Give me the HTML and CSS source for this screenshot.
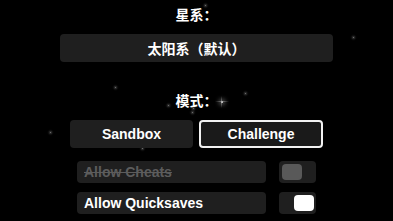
FILE: index.html
```html
<!DOCTYPE html>
<html lang="zh">

<head>
    <meta charset="UTF-8">
    <meta name="viewport" content="width=device-width, initial-scale=1.0">
    <title>星系设置</title>
    <link rel="stylesheet" href="styles.css">
</head>

<body>
    <div class="sky">
        <span class="star" style="left: 205px; top: 5px;"></span>
        <span class="star" style="left: 353px; top: 37px;"></span>
        <span class="star" style="left: 115px; top: 87px;"></span>
        <span class="star" style="left: 245px; top: 93px;"></span>
        <span class="star" style="left: 168px; top: 105px;"></span>
        <span class="star" style="left: 193px; top: 108px;"></span>
        <span class="star" style="left: 192px; top: 112px;"></span>
        <span class="star" style="left: 50px; top: 132px;"></span>
        <span class="star" style="left: 142px; top: 148px;"></span>
        <span class="sparkle" style="left: 222px; top: 102px;"></span>
    </div>

    <div class="menu">
        <div class="label">星系：</div>
        <div class="select">太阳系（默认）</div>

        <div class="label label-mode">模式：</div>
        <div class="modes">
            <div class="mode">Sandbox</div>
            <div class="mode active">Challenge</div>
        </div>

        <div class="option disabled">
            <div class="option-name">Allow Cheats</div>
            <div class="toggle"><span class="knob"></span></div>
        </div>
        <div class="option">
            <div class="option-name">Allow Quicksaves</div>
            <div class="toggle on"><span class="knob"></span></div>
        </div>
    </div>
</body>

</html>
```

FILE: styles.css
```css
* {
    box-sizing: border-box;
}

body {
    margin: 0;
    padding: 0;
    background-color: #000000;
    width: 393px;
    height: 221px;
    overflow: hidden;
    position: relative;
    font-family: "Liberation Sans", "Noto Sans CJK SC", sans-serif;
    font-weight: bold;
    font-size: 14px;
    color: #ffffff;
}

.sky {
    position: absolute;
    inset: 0;
    z-index: 0;
}

.star {
    position: absolute;
    width: 1px;
    height: 1px;
    background-color: #6a6a6a;
    box-shadow: 0 0 2px 1px rgba(120, 120, 120, 0.5);
}

.sparkle {
    position: absolute;
    width: 2px;
    height: 2px;
    margin: -1px 0 0 -1px;
    background-color: #bbbbbb;
    box-shadow: 0 0 4px 2px rgba(150, 150, 150, 0.5);
}

.sparkle::before,
.sparkle::after {
    content: "";
    position: absolute;
    background: linear-gradient(90deg, transparent, rgba(170, 170, 170, 0.6), transparent);
}

.sparkle::before {
    width: 14px;
    height: 1px;
    left: -6px;
    top: 0;
}

.sparkle::after {
    width: 1px;
    height: 12px;
    left: 0;
    top: -5px;
    background: linear-gradient(180deg, transparent, rgba(170, 170, 170, 0.6), transparent);
}

.menu {
    position: relative;
    z-index: 1;
    display: flex;
    flex-direction: column;
    align-items: center;
    padding-top: 4px;
}

.label {
    height: 20px;
    line-height: 20px;
    font-family: "Noto Sans CJK SC", sans-serif;
    font-size: 14px;
}

.label-mode {
    margin-top: 28px;
}

.select {
    margin-top: 10px;
    width: 273px;
    height: 28px;
    line-height: 28px;
    text-align: center;
    background-color: #1f1f1f;
    border-radius: 4px;
    font-family: "Noto Sans CJK SC", sans-serif;
}

.modes {
    margin-top: 10px;
    display: flex;
    gap: 6px;
}

.mode {
    width: 123px;
    height: 28px;
    display: flex;
    align-items: center;
    justify-content: center;
    background-color: #1f1f1f;
    border-radius: 4px;
}

.mode.active {
    width: 124px;
    background-color: #1a1a1a;
    border: 2px solid #f2f2f2;
}

.option {
    display: flex;
    gap: 13px;
    margin-top: 9px;
}

.modes + .option {
    margin-top: 13px;
}

.option-name {
    width: 189px;
    height: 22px;
    padding-left: 7px;
    display: flex;
    align-items: center;
    background-color: #1f1f1f;
    border-radius: 4px;
}

.disabled .option-name {
    color: #5c5c5c;
    text-decoration: line-through;
}

.toggle {
    width: 37px;
    height: 22px;
    padding: 3px;
    background-color: #1f1f1f;
    border-radius: 4px;
    display: flex;
}

.knob {
    width: 20px;
    height: 16px;
    border-radius: 4px;
    background-color: #595959;
}

.toggle.on {
    justify-content: flex-end;
    padding-right: 2px;
}

.toggle.on .knob {
    background-color: #ffffff;
}
```
